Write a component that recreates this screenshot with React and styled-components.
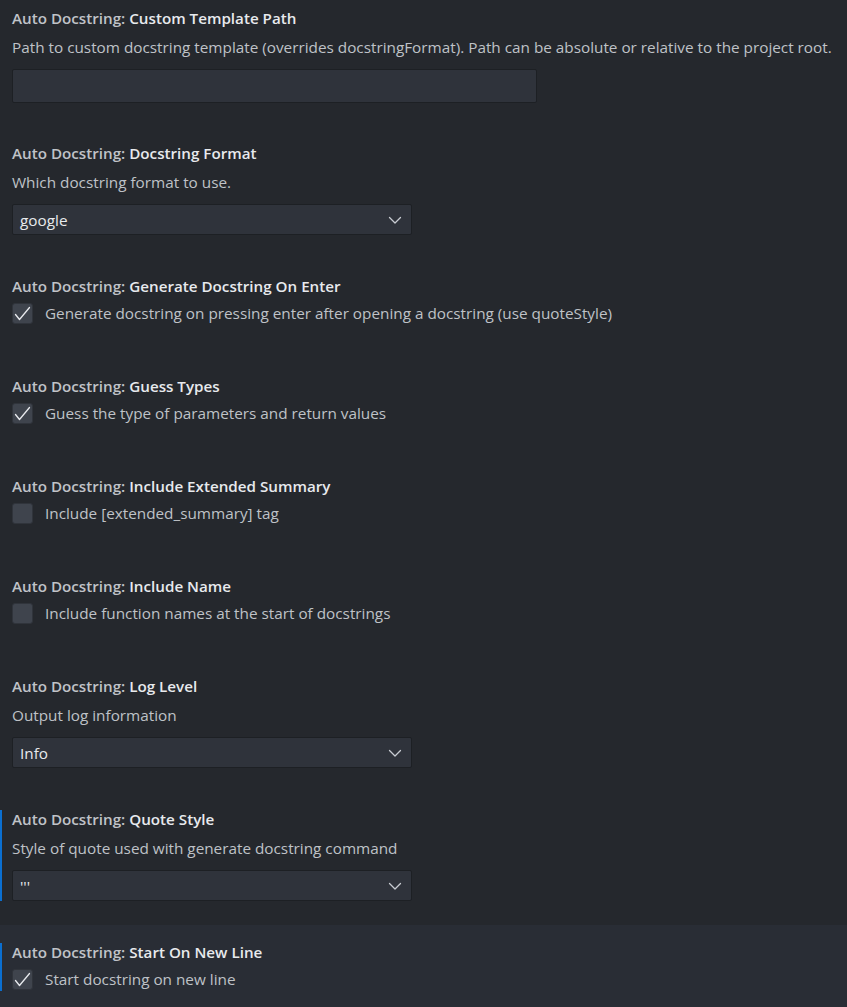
import React from "react";
import styled, { createGlobalStyle } from "styled-components";

const GlobalStyle = createGlobalStyle`
  html, body {
    margin: 0;
    padding: 0;
    background: #25282d;
  }
  body {
    font-family: "Open Sans", "Noto Sans", sans-serif;
    overflow: hidden;
  }
`;

const settings = [
  {
    label: "Custom Template Path",
    description:
      "Path to custom docstring template (overrides docstringFormat). Path can be absolute or relative to the project root.",
    type: "text",
  },
  {
    label: "Docstring Format",
    description: "Which docstring format to use.",
    type: "select",
    value: "google",
  },
  {
    label: "Generate Docstring On Enter",
    description:
      "Generate docstring on pressing enter after opening a docstring (use quoteStyle)",
    type: "checkbox",
    checked: true,
  },
  {
    label: "Guess Types",
    description: "Guess the type of parameters and return values",
    type: "checkbox",
    checked: true,
  },
  {
    label: "Include Extended Summary",
    description: "Include [extended_summary] tag",
    type: "checkbox",
    checked: false,
  },
  {
    label: "Include Name",
    description: "Include function names at the start of docstrings",
    type: "checkbox",
    checked: false,
  },
  {
    label: "Log Level",
    description: "Output log information",
    type: "select",
    value: "Info",
  },
  {
    label: "Quote Style",
    description: "Style of quote used with generate docstring command",
    type: "select",
    value: "'''",
    modified: true,
  },
  {
    label: "Start On New Line",
    description: "Start docstring on new line",
    type: "checkbox",
    checked: true,
    modified: true,
    hovered: true,
  },
];

function ChevronDown() {
  return (
    <svg width='16' height='16' viewBox='0 0 16 16' fill='none'>
      <path
        d='M2.5 5.5 8 11l5.5-5.5'
        stroke='#c8ccd2'
        strokeWidth='1.3'
        strokeLinecap='round'
        strokeLinejoin='round'
      />
    </svg>
  );
}

function CheckMark() {
  return (
    <svg width='19' height='19' viewBox='0 0 19 19' fill='none'>
      <path
        d='M2.5 10.5 6.5 15.5 16.5 3.5'
        stroke='#e8eaee'
        strokeWidth='1.3'
        strokeLinecap='round'
        strokeLinejoin='round'
      />
    </svg>
  );
}

function SettingControl({ item }) {
  if (item.type === "text") {
    return <TextInput />;
  }
  if (item.type === "select") {
    return (
      <Select>
        <SelectValue>{item.value}</SelectValue>
        <ChevronDown />
      </Select>
    );
  }
  return null;
}

function itemBottom(item) {
  if (item.hovered) return 60;
  if (item.type === "checkbox") return 34;
  if (item.type === "text") return 23;
  return 24;
}

export default function App() {
  return (
    <>
      <GlobalStyle />
      <List>
        {settings.map((item) => (
          <Item
            key={item.label}
            $hovered={item.hovered}
            $bottom={itemBottom(item)}
          >
            <Contents $modified={item.modified}>
              <Title>
                <Category>Auto Docstring: </Category>
                <Label>{item.label}</Label>
              </Title>
              {item.type === "checkbox" ? (
                <CheckRow>
                  <CheckBox>{item.checked && <CheckMark />}</CheckBox>
                  <Description>{item.description}</Description>
                </CheckRow>
              ) : (
                <>
                  <Description $block>{item.description}</Description>
                  <SettingControl item={item} />
                </>
              )}
            </Contents>
          </Item>
        ))}
      </List>
    </>
  );
}

const List = styled.div`
  margin-top: -9px;
  width: 847px;
  height: 1016px;
  overflow: hidden;
`;

const Item = styled.div`
  padding: 18px 0 ${(p) => p.$bottom}px 0;
  background: ${(p) => (p.$hovered ? "#292d35" : "transparent")};
`;

const Contents = styled.div`
  position: relative;
  padding-left: 12px;
  &::before {
    content: "";
    display: ${(p) => (p.$modified ? "block" : "none")};
    position: absolute;
    left: 0;
    top: 0;
    bottom: 0;
    width: 2px;
    background: #0b6fd0;
  }
`;

const Title = styled.div`
  font-size: 15.2px;
  font-weight: 600;
  line-height: 18px;
  white-space: nowrap;
`;

const Category = styled.span`
  color: #c0c3c8;
`;

const Label = styled.span`
  color: #e8eaed;
`;

const Description = styled.div`
  font-size: 15.3px;
  line-height: 18px;
  color: #bfc2c7;
  white-space: nowrap;
  margin-top: ${(p) => (p.$block ? "11px" : "0")};
`;

const TextInput = styled.div`
  margin-top: 13px;
  box-sizing: border-box;
  width: 525px;
  height: 34px;
  background: #2f333b;
  border: 1px solid #1d2024;
  border-radius: 2px;
`;

const Select = styled.div`
  margin-top: 13px;
  box-sizing: border-box;
  width: 400px;
  height: 31px;
  padding: 0 8px 0 0;
  display: flex;
  align-items: center;
  justify-content: space-between;
  background: #2f333b;
  border: 1px solid #1d2024;
  border-radius: 2px;
`;

const SelectValue = styled.span`
  padding-left: 7px;
  font-size: 15.3px;
  color: #e8eaed;
`;

const CheckRow = styled.div`
  display: flex;
  align-items: center;
  gap: 12px;
  height: 24px;
  margin-top: 6px;
`;

const CheckBox = styled.div`
  width: 21px;
  height: 21px;
  box-sizing: border-box;
  flex: none;
  display: flex;
  align-items: center;
  justify-content: center;
  background: #3f444d;
  border: 1px solid #30343b;
  border-radius: 3px;
`;
